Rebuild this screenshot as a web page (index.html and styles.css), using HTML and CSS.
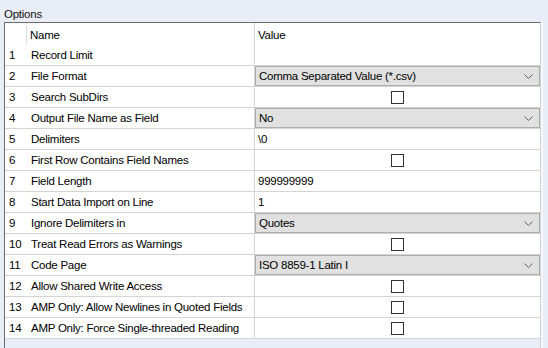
FILE: index.html
```html
<!DOCTYPE html>
<html lang="en">
<head>
  <meta charset="UTF-8" />
  <title>Options</title>
  <link rel="stylesheet" href="styles.css">
</head>
<body>
  <div class="panel">
    <div class="caption">Options</div>
    <div class="grid">
      <div class="row head">
        <div class="num"></div>
        <div class="name">Name</div>
        <div class="value">Value</div>
      </div>
      <div class="row first">
        <div class="num">1</div>
        <div class="name">Record Limit</div>
        <div class="value"></div>
      </div>
      <div class="row">
        <div class="num">2</div>
        <div class="name">File Format</div>
        <div class="value"><div class="combo">Comma Separated Value (*.csv)<svg class="chev" width="9" height="5" viewBox="0 0 9 5"><path d="M0.5 0.5 L4.5 4.5 L8.5 0.5" fill="none" stroke="#606060"/></svg></div></div>
      </div>
      <div class="row">
        <div class="num">3</div>
        <div class="name">Search SubDirs</div>
        <div class="value check"><span class="box"></span></div>
      </div>
      <div class="row">
        <div class="num">4</div>
        <div class="name">Output File Name as Field</div>
        <div class="value"><div class="combo">No<svg class="chev" width="9" height="5" viewBox="0 0 9 5"><path d="M0.5 0.5 L4.5 4.5 L8.5 0.5" fill="none" stroke="#606060"/></svg></div></div>
      </div>
      <div class="row">
        <div class="num">5</div>
        <div class="name">Delimiters</div>
        <div class="value">\0</div>
      </div>
      <div class="row">
        <div class="num">6</div>
        <div class="name">First Row Contains Field Names</div>
        <div class="value check"><span class="box"></span></div>
      </div>
      <div class="row">
        <div class="num">7</div>
        <div class="name">Field Length</div>
        <div class="value">999999999</div>
      </div>
      <div class="row">
        <div class="num">8</div>
        <div class="name">Start Data Import on Line</div>
        <div class="value">1</div>
      </div>
      <div class="row">
        <div class="num">9</div>
        <div class="name">Ignore Delimiters in</div>
        <div class="value"><div class="combo">Quotes<svg class="chev" width="9" height="5" viewBox="0 0 9 5"><path d="M0.5 0.5 L4.5 4.5 L8.5 0.5" fill="none" stroke="#606060"/></svg></div></div>
      </div>
      <div class="row">
        <div class="num">10</div>
        <div class="name">Treat Read Errors as Warnings</div>
        <div class="value check"><span class="box"></span></div>
      </div>
      <div class="row">
        <div class="num">11</div>
        <div class="name">Code Page</div>
        <div class="value"><div class="combo">ISO 8859-1 Latin I<svg class="chev" width="9" height="5" viewBox="0 0 9 5"><path d="M0.5 0.5 L4.5 4.5 L8.5 0.5" fill="none" stroke="#606060"/></svg></div></div>
      </div>
      <div class="row">
        <div class="num">12</div>
        <div class="name">Allow Shared Write Access</div>
        <div class="value check"><span class="box"></span></div>
      </div>
      <div class="row">
        <div class="num">13</div>
        <div class="name">AMP Only: Allow Newlines in Quoted Fields</div>
        <div class="value check"><span class="box"></span></div>
      </div>
      <div class="row">
        <div class="num">14</div>
        <div class="name">AMP Only: Force Single-threaded Reading</div>
        <div class="value check"><span class="box"></span></div>
      </div>
    </div>
  </div>
</body>
</html>
```

FILE: styles.css
```css
body {
  margin: 0;
  background: #e9edf7;
  font-family: 'Liberation Sans', Arial, sans-serif;
  font-size: 11.5px;
  letter-spacing: -0.25px;
  color: #000;
  overflow: hidden;
}
.panel {
  padding: 5px 0 0 4px;
}
.caption {
  height: 17px;
  line-height: 18px;
  color: #111;
}
.grid {
  width: 535px;
  height: 340px;
  border-left: 1px solid #6b6b6b;
  border-top: 1px solid #6b6b6b;
  border-right: 1px solid #d3d3d3;
  box-shadow: 2px 0 0 #f7f8fb;
}
.row {
  display: grid;
  grid-template-columns: 22px 227px 1fr;
  height: 20px;
  background: #fff;
  border-bottom: 1px solid #d4d4d4;
}
.row.head {
  height: 22px;
  border-bottom: none;
}
.row > div {
  line-height: 20px;
  white-space: nowrap;
  overflow: hidden;
}
.num {
  padding-left: 4px;
}
.name {
  padding-left: 4px;
}
.value {
  border-left: 1px solid #d4d4d4;
  padding-left: 3px;
}
.head .num {
  border-right: 1px solid #e0e0e0;
}
.head .name {
  padding-left: 3px;
}
.head > div {
  line-height: 24px;
}
.check {
  display: flex;
  align-items: center;
  justify-content: center;
  padding-left: 0;
}
.box {
  width: 11px;
  height: 11px;
  border: 1px solid #333;
  background: #fff;
}
.row > .value:has(.combo) {
  padding-left: 0;
}
.combo {
  display: flex;
  align-items: center;
  justify-content: space-between;
  height: 18px;
  line-height: 18px;
  padding: 0 6px 0 3px;
  background: #e1e1e1;
  border: 1px solid #adadad;
}
.chev {
  display: block;
}
```
